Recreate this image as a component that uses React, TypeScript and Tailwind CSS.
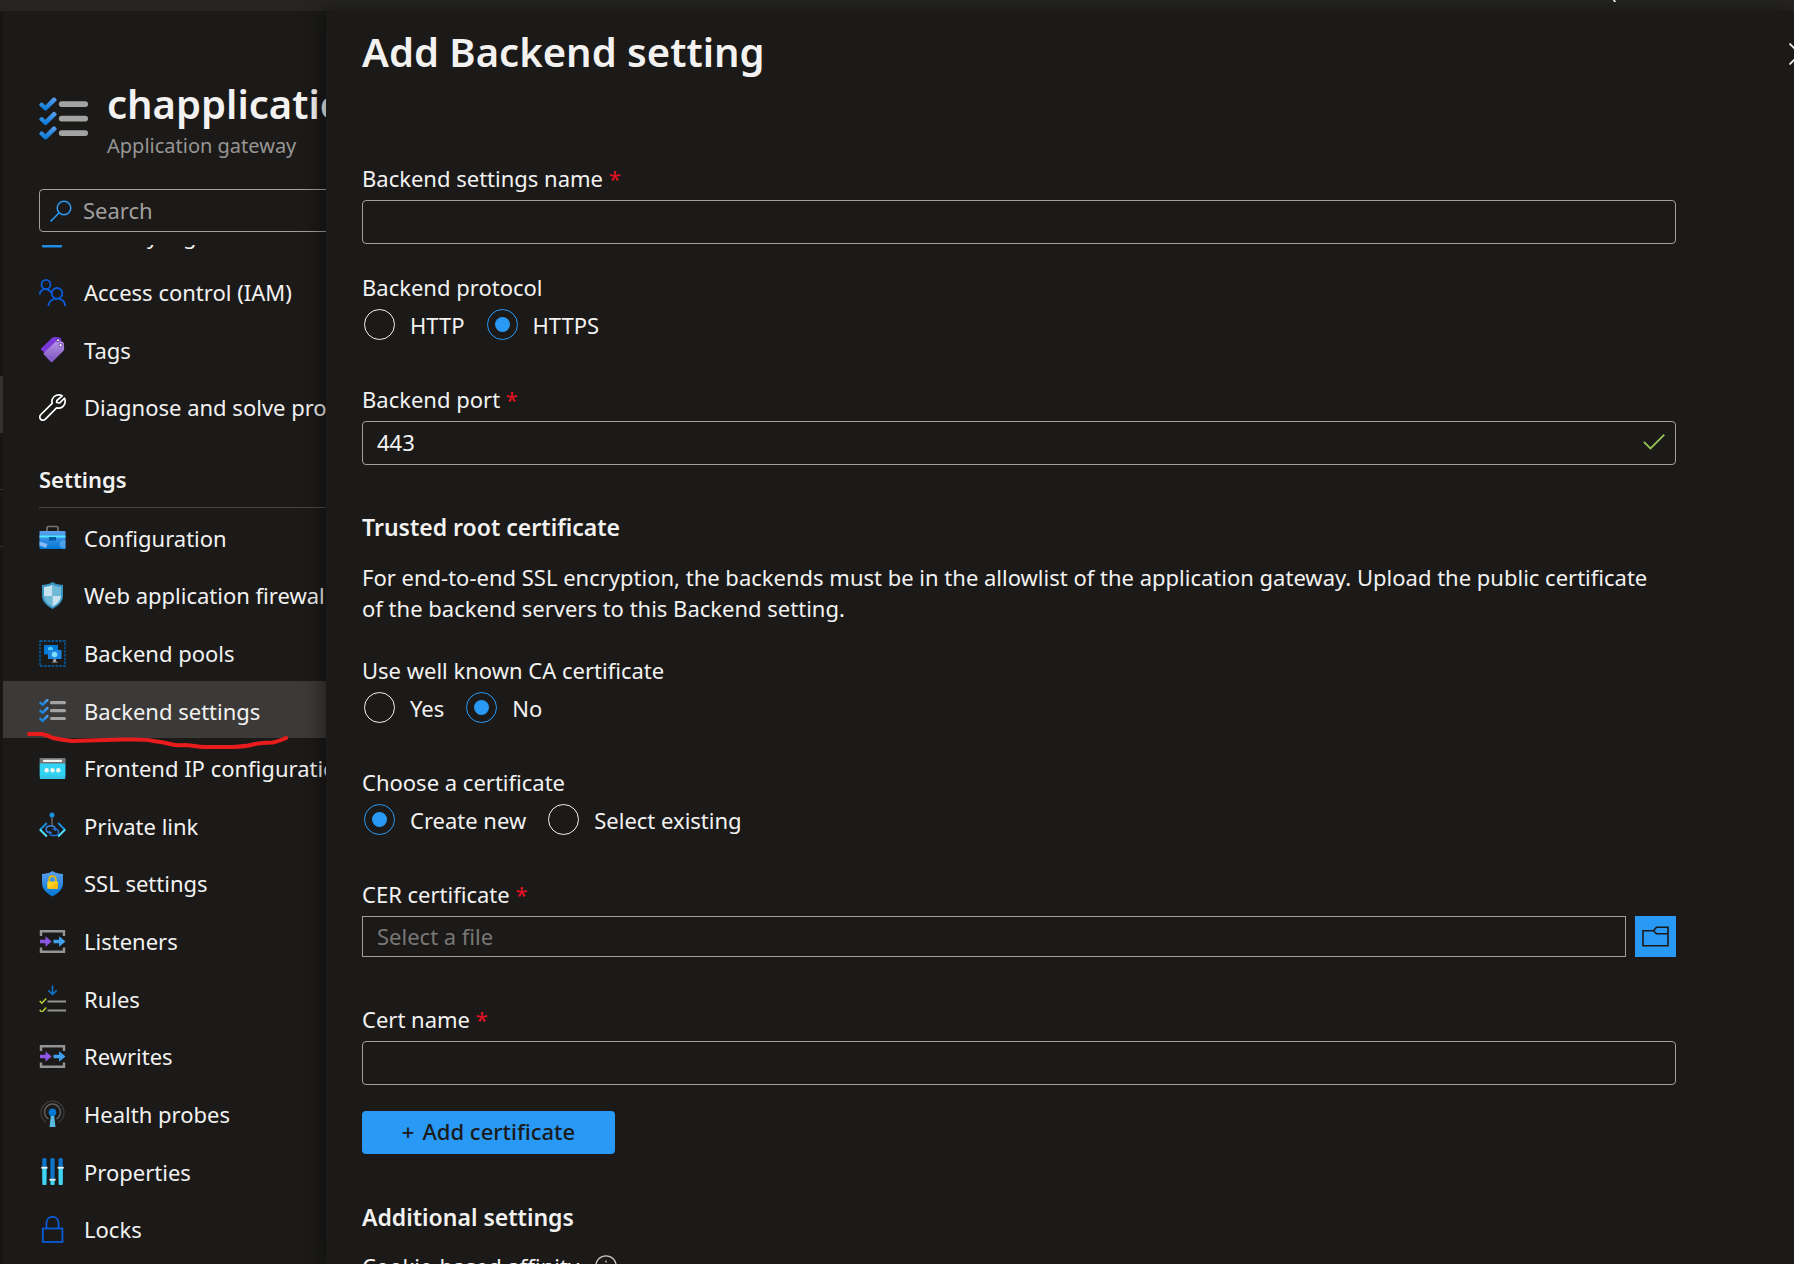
import { useState } from "react";
import type { ReactNode } from "react";

const ChecklistIcon = ({ className = "size-[27px]" }: { className?: string }) => (
  <svg viewBox="0 0 18 18" className={className} fill="none" aria-hidden="true">
    <defs>
      <linearGradient id="check-blue" x1="0" y1="0" x2="0" y2="1">
        <stop offset="0" stopColor="#5ea0ef" />
        <stop offset="1" stopColor="#0078d4" />
      </linearGradient>
    </defs>
    {[1.3, 6.6, 11.9].map((y) => (
      <g key={y} transform={`translate(0 ${y})`}>
        <path
          d="M0.1 2.5 L0.7 1.9 Q1 1.7 1.3 1.9 L2.3 2.9 L5.1 0.1 Q5.5 -0.2 5.9 0.1 L6.4 0.6 Q6.6 0.9 6.4 1.2 L2.8 4.7 Q2.4 5 2 4.7 L0.1 2.9 Z"
          fill="url(#check-blue)"
        />
        <rect x="7.3" y="1.4" width="10.7" height="2.1" rx="1" fill="#a3a3a3" />
      </g>
    ))}
  </svg>
);

const LogIcon = () => (
  <svg viewBox="0 0 27 27" className="size-[27px]" aria-hidden="true">
    <rect x="3" y="1" width="20" height="25.5" rx="1" fill="#1f8ce6" />
  </svg>
);

const PeopleIcon = () => (
  <svg viewBox="0 0 27 27" className="size-[27px]" fill="none" stroke="#0a5bd8" strokeWidth="1.8" aria-hidden="true">
    <circle cx="7" cy="5.4" r="4.5" />
    <circle cx="18" cy="14.3" r="5.3" />
    <path d="M0.8 15.5c0-3.2 2.3-5.5 5.5-5.5 2.4 0 4.3 1.1 6.2 3.8" />
    <path d="M9.2 27c.6-4.700 4.300-7.400 8.800-7.400s7.900 2.700 8.300 7.400" />
  </svg>
);

const TagsIcon = () => (
  <svg viewBox="0 0 27 27" className="size-[27px]" aria-hidden="true">
    <defs>
      <linearGradient id="tag-front" x1="0" y1="0" x2="0" y2="1">
        <stop offset="0" stopColor="#b796e8" />
        <stop offset="1" stopColor="#7b50bd" />
      </linearGradient>
    </defs>
    <path d="M2 12.5 13.500 1.600Q14.300 1 15.300 1L20 1.300Q22 1.600 22.200 3.500L22.500 8 9 19.500 2.300 14Q1.500 13.200 2 12.500Z" fill="#7938d8" />
    <path d="M4.800 17 16.500 5.800Q17.500 5 18.500 5L22.800 5.500Q24.600 6 24.800 7.500L25.200 13Q25.200 14.200 24.300 15L13 26.300Q12.400 26.600 11.900 26.100L4.800 18.500Q4.100 17.700 4.800 17Z" fill="url(#tag-front)" />
    <circle cx="19" cy="4.3" r="1.5" fill="#fff" stroke="#3c1a70" strokeWidth=".8" />
    <circle cx="21.6" cy="9.2" r="1.7" fill="#fff" stroke="#5a2fa0" strokeWidth=".9" />
  </svg>
);

const WrenchIcon = () => (
  <svg viewBox="0 0 27 27" className="size-[27px]" fill="none" stroke="#fff" strokeWidth="1.7" strokeLinejoin="round" aria-hidden="true">
    <path d="M23.200 1.800C19.500-.2 14.800 1.300 13.300 5.200c-.5 1.500-.5 2.800-.1 4.200L1.900 20.500c-1.500 1.500-1.500 3.500-.2 4.800s3.300 1.200 4.700-.2L17.600 13.900c4.600 1.200 8.600-2 8.600-6.600 0-1.200-.2-2.200-.7-3.100L20.700 9 17.600 8.500 17.900 6.500Z" />
  </svg>
);

const ToolboxIcon = () => (
  <svg viewBox="0 0 27 27" className="size-[27px]" aria-hidden="true">
    <defs>
      <linearGradient id="toolbox" x1="0" y1="0" x2="0" y2="1">
        <stop offset="0" stopColor="#5ea0ef" />
        <stop offset="1" stopColor="#0078d4" />
      </linearGradient>
    </defs>
    <path d="M8 7V4q0-1.500 1.500-1.500h8Q19 2.500 19 4V7" fill="none" stroke="#767676" strokeWidth="1.6" />
    <rect x=".5" y="7" width="26" height="18" rx=".8" fill="url(#toolbox)" />
    <rect x=".5" y="11.5" width="26" height="2" fill="#50e6ff" />
    <rect x="10" y="13" width="7" height="3.5" fill="#005ba1" />
    <path d="M.5 17.500l8 2.500-1.500 4-6.500-2.500z" fill="#83b9f9" />
    <path d="M26.500 16.500c-4-.5-6 1.500-6 4 0 2 1 3.500 3 4h3z" fill="#83b9f9" opacity=".5" />
  </svg>
);

const FirewallIcon = () => (
  <svg viewBox="0 0 27 27" className="size-[27px]" aria-hidden="true">
    <path d="M13.500 0C17 2.300 20.500 3 24 3v10.500c0 6.500-5 10.500-10.500 13.500C8 24 3 20 3 13.500V3c3.500 0 7-.7 10.500-3z" fill="#3a94c1" />
    <path d="M13.500 2.800V14H5V4.900c3-.2 5.800-.7 8.500-2.100z" fill="#c4e3ef" />
    <path d="M13.500 2.800V14H22V4.900c-3-.2-5.800-.7-8.500-2.100z" fill="#6fb8d8" />
    <path d="M5 14h8.500v10.700C9 22.200 5 18.800 5 14z" fill="#6fb8d8" />
    <path d="M22 14h-8.500v10.700C18 22.200 22 18.800 22 14z" fill="#c4e3ef" />
  </svg>
);

const PoolsIcon = () => (
  <svg viewBox="0 0 27 27" className="size-[27px]" aria-hidden="true">
    <rect x="1" y="1" width="25" height="25" fill="none" stroke="#0067b8" strokeWidth="1.3" strokeDasharray="2.6 1.2" />
    <rect x="5" y="5" width="14" height="9.5" fill="#0078d4" />
    <path d="M11.500 6.500l2.500 1.300v3l-2.500 1.200L9 10.800v-3z" fill="#50c8f5" />
    <rect x="9" y="10" width="13.5" height="9" fill="#1c84e0" />
    <path d="M15.500 11.500l2.700 1.400v3l-2.700 1.500-2.700-1.500v-3z" fill="#7fe0fb" />
    <path d="M14.500 19h2.300l.4 2.200 1.800 1.300h-6.600l1.700-1.300z" fill="#a3a3a3" />
  </svg>
);

const BrowserIcon = () => (
  <svg viewBox="0 0 27 27" className="size-[27px]" aria-hidden="true">
    <rect x=".8" y="3" width="25.5" height="21" rx=".8" fill="#32c5e8" />
    <rect x=".8" y="8.5" width="25.5" height="12" fill="#32d4f5" />
    <path d="M.8 3h25.500v5.500H.8z" fill="#767676" />
    <rect x="4" y="4.7" width="19" height="2.2" rx=".6" fill="#f2f2f2" />
    <circle cx="7.7" cy="15.3" r="2.2" fill="#f2f2f2" />
    <circle cx="13.5" cy="15.3" r="2.2" fill="#f2f2f2" />
    <circle cx="19.3" cy="15.3" r="2.2" fill="#f2f2f2" />
  </svg>
);

const PrivateLinkIcon = () => (
  <svg viewBox="0 0 27 27" className="size-[27px]" fill="none" aria-hidden="true">
    <path d="M13 5v9" stroke="#767676" strokeWidth="1.3" />
    <circle cx="13" cy="3" r="2.5" fill="#1490df" />
    <path d="M7.800 11 .9 18" stroke="#1490df" strokeWidth="1.8" />
    <path d="M.9 17.500l7 7" stroke="#50e6ff" strokeWidth="1.8" />
    <path d="M19.200 11l6.900 7" stroke="#1490df" strokeWidth="1.8" />
    <path d="M26.100 17.500l-7 7" stroke="#50e6ff" strokeWidth="1.8" />
    <path d="M12.800 20.600H10.500a3.300 3.300 0 010-6.600h2.800a3.300 3.300 0 012.800 4.700" stroke="#3b86e0" strokeWidth="1.5" />
    <path d="M13.500 16.900h2.700a3.300 3.300 0 010 6.600h-2.800a3.300 3.300 0 01-2.800-4.700" stroke="#1b6fd4" strokeWidth="1.5" />
  </svg>
);

const SslIcon = () => (
  <svg viewBox="0 0 27 27" className="size-[27px]" aria-hidden="true">
    <path d="M13.500 1C17 3.300 20.500 3.800 24 3.900V13c0 6.500-5 10.500-10.500 13.500C8 23.500 3 19.500 3 13V3.900c3.500-.1 7-.6 10.500-2.900z" fill="url(#toolbox)" />
    <path d="M10.200 12V9.300c0-4.200 6.600-4.200 6.600 0V12" fill="none" stroke="#e8b800" strokeWidth="1.7" />
    <rect x="8.3" y="11.5" width="10.5" height="7.2" rx=".6" fill="#ffd21f" />
    <path d="M18.800 12v6.700H9z" fill="#f5bd0c" />
  </svg>
);

const ArrowsIcon = () => (
  <svg viewBox="0 0 27 27" className="size-[27px]" aria-hidden="true">
    <path d="M2 8V3.300h23V8M2 19.500v4.200h23v-4.200" fill="none" stroke="#949494" strokeWidth="2.4" />
    <path d="M1 11.800h5.500V8.300l6.200 5.200-6.200 5.200v-3.500H1z" fill="#8a56e2" />
    <path d="M14.500 11.800h5.600V8.300l6.400 5.200-6.400 5.200v-3.500h-5.600z" fill="#3fa0ee" />
  </svg>
);

const RulesIcon = () => (
  <svg viewBox="0 0 27 27" className="size-[27px]" fill="none" aria-hidden="true">
    <path d="M13.500.5v9M9.200 5.200l4.300 4.300 4.300-4.300" stroke="#0f78cf" strokeWidth="1.5" />
    <path d="M8.500 16.500H27M8.500 25.500H27" stroke="#949494" strokeWidth="1.8" />
    <path d="M.7 16l2.200 2.200 4.300-4.700M.7 25l2.200 2.200 4.300-4.700" stroke="#b4d335" strokeWidth="1.5" />
  </svg>
);

const ProbeIcon = () => (
  <svg viewBox="0 0 27 27" className="size-[27px]" fill="none" aria-hidden="true">
    <path d="M7.500 22.500a11.500 11.500 0 1112 0" stroke="#3c3b3a" strokeWidth="1.3" />
    <path d="M9.500 19a8 8 0 118 0" stroke="#605e5c" strokeWidth="1.4" />
    <path d="M12 14h3l1.500 13h-6z" fill="#5ab8de" />
    <circle cx="13.5" cy="12.3" r="3.8" fill="#0078d4" />
  </svg>
);

const SlidersIcon = () => (
  <svg viewBox="0 0 27 27" className="size-[27px]" aria-hidden="true">
    {[
      { x: 3.3, y: 9.5 },
      { x: 11.4, y: 21.5 },
      { x: 19.6, y: 9.5 },
    ].map(({ x, y }) => (
      <g key={x}>
        <rect x={x} y="0" width="4.2" height="22" rx="1.5" fill="#0f74cc" />
        <rect x={x} y={y} width="4.2" height={27 - y} rx="1" fill="#3fd4f2" />
        <rect x={x - 1} y={y - 0.7} width="6.2" height="1.8" fill="#f2f2f2" />
      </g>
    ))}
  </svg>
);

const LockIcon = () => (
  <svg viewBox="0 0 27 27" className="size-[27px]" fill="none" stroke="#0a5bd8" strokeWidth="1.8" aria-hidden="true">
    <rect x="3.8" y="12.5" width="19.6" height="13.5" />
    <path d="M7.500 12.500V7c0-8.200 12-8.200 12 0v5.500" />
  </svg>
);

const generalItems = [
  { label: "Activity log", icon: <LogIcon /> },
  { label: "Access control (IAM)", icon: <PeopleIcon /> },
  { label: "Tags", icon: <TagsIcon /> },
  { label: "Diagnose and solve problems", icon: <WrenchIcon /> },
];

const settingItems = [
  { label: "Configuration", icon: <ToolboxIcon /> },
  { label: "Web application firewall", icon: <FirewallIcon /> },
  { label: "Backend pools", icon: <PoolsIcon /> },
  { label: "Backend settings", icon: <ChecklistIcon />, active: true },
  { label: "Frontend IP configurations", icon: <BrowserIcon /> },
  { label: "Private link", icon: <PrivateLinkIcon /> },
  { label: "SSL settings", icon: <SslIcon /> },
  { label: "Listeners", icon: <ArrowsIcon /> },
  { label: "Rules", icon: <RulesIcon /> },
  { label: "Rewrites", icon: <ArrowsIcon /> },
  { label: "Health probes", icon: <ProbeIcon /> },
  { label: "Properties", icon: <SlidersIcon /> },
  { label: "Locks", icon: <LockIcon /> },
];

type NavItemProps = { label: string; icon: ReactNode; active?: boolean };

const NavItem = ({ label, icon, active }: NavItemProps) => (
  <li className="relative">
    <a
      href="#"
      aria-current={active ? "page" : undefined}
      className={
        active
          ? "flex h-full items-center gap-[18px] whitespace-nowrap bg-[#3b3a39] pl-9 pt-0.5"
          : "flex h-full items-center gap-[18px] whitespace-nowrap pl-9 pt-0.5"
      }
    >
      <span className="shrink-0">{icon}</span>
      {label}
    </a>
    {active && (
      <svg
        viewBox="0 0 262 18"
        className="pointer-events-none absolute left-6 top-[50px] z-10 h-[18px] w-[262px]"
        fill="none"
        stroke="#e81c1c"
        strokeWidth="4"
        strokeLinecap="round"
        strokeLinejoin="round"
        aria-hidden="true"
      >
        <path d="M2 3H15Q20 4 26 7Q35 9 45 10Q70 9 96 8.500T126 10Q136 11 143 13T159 14Q168 15 175 16H206Q218 15.500 226 13.500T246 11.500Q253 10 259 7" />
      </svg>
    )}
  </li>
);

const Required = () => <span className="text-[#e81123]"> *</span>;

type RadioFieldProps = {
  legend: string;
  name: string;
  options: string[];
  initial: string;
  className?: string;
};

const RadioField = ({ legend, name, options, initial, className }: RadioFieldProps) => {
  const [value, setValue] = useState(initial);

  return (
    <fieldset className={className}>
      <legend>{legend}</legend>
      <div className="mt-[7px] flex gap-[22px] pl-0.5">
        {options.map((option) => (
          <label key={option} className="flex h-[31px] items-center gap-[15px]">
            <input
              type="radio"
              name={name}
              checked={value === option}
              onChange={() => setValue(option)}
              className="grid size-[31px] appearance-none place-content-center rounded-full border border-[#f3f2f1] before:size-[15px] before:rounded-full checked:border-[#2899f5] checked:before:bg-[#2899f5]"
            />
            <span>{option}</span>
          </label>
        ))}
      </div>
    </fieldset>
  );
};

const Sidebar = () => (
  <aside className="relative flex w-[323px] shrink-0 flex-col overflow-hidden">
    <div className="flex gap-[19px] pl-9 pt-[68px]">
      <ChecklistIcon className="mt-[15px] size-[49px] shrink-0" />
      <div>
        <h1 className="text-[40px] font-semibold leading-[50px]">chapplicationgateway</h1>
        <p className="mt-0.5 text-xl leading-[30px] text-[#979593]">Application gateway</p>
      </div>
    </div>
    <label className="ml-9 mt-7 flex h-[43px] w-[400px] shrink-0 items-center gap-[11px] rounded-sm border border-[#a19f9d] pl-2.5">
      <svg viewBox="0 0 22 22" className="size-[22px]" fill="none" stroke="#2899f5" strokeWidth="1.5" aria-hidden="true">
        <circle cx="14" cy="8" r="6.8" />
        <path d="M9.200 12.800.6 21.400" />
      </svg>
      <input
        type="text"
        aria-label="Search"
        placeholder="Search"
        className="bg-transparent pb-0.5 outline-none placeholder:text-[#a19f9d]"
      />
    </label>
    <nav className="mt-[13px] min-h-0 flex-1 overflow-hidden">
      {/* list is scrolled a little, first row is cut off */}
      <ul className="-mt-10 grid h-[230px] auto-rows-fr">
        {generalItems.map((item) => (
          <NavItem key={item.label} {...item} />
        ))}
      </ul>
      <h2 className="ml-9 mt-[29px] border-b border-[#484644] pb-[13px] font-semibold">Settings</h2>
      <ul className="grid h-[749px] auto-rows-fr">
        {settingItems.map((item) => (
          <NavItem key={item.label} {...item} />
        ))}
      </ul>
    </nav>
  </aside>
);

const inputClass =
  "mt-[7px] block h-11 w-full rounded-sm border border-[#a19f9d] bg-transparent px-[14px] pb-0.5 outline-none";

const BackendSettingPanel = () => {
  const [port, setPort] = useState("443");

  return (
    <main className="relative z-20 min-w-0 flex-1 overflow-hidden bg-[#1b1a19] pl-9 pr-[118px] shadow-[-4px_0_18px_rgba(0,0,0,0.45)]">
      <h1 className="pt-4 text-[40px] font-semibold leading-[50px]">Add Backend setting</h1>
      <button type="button" aria-label="Close" className="absolute -right-[17px] top-8">
        <svg viewBox="0 0 22 22" className="size-[22px]" stroke="#f3f2f1" strokeWidth="1.8" aria-hidden="true">
          <path d="M.5.5l21 21M21.500.5l-21 21" />
        </svg>
      </button>

      <form onSubmit={(e) => e.preventDefault()}>
        <div className="mt-[86px]">
          <label htmlFor="name">
            Backend settings name
            <Required />
          </label>
          <input id="name" type="text" className={inputClass} />
        </div>

        <RadioField
          legend="Backend protocol"
          name="protocol"
          options={["HTTP", "HTTPS"]}
          initial="HTTPS"
          className="mt-7"
        />

        <div className="mt-11">
          <label htmlFor="port">
            Backend port
            <Required />
          </label>
          <div className="relative">
            <input
              id="port"
              type="text"
              value={port}
              onChange={(e) => setPort(e.target.value)}
              className={inputClass}
            />
            <svg
              viewBox="0 0 22 16"
              className="absolute right-[11px] top-[13px] h-4 w-[22px]"
              fill="none"
              stroke="#92c353"
              strokeWidth="1.8"
              aria-hidden="true"
            >
              <path d="M.8 7.800l6.700 6.700L21.300.7" />
            </svg>
          </div>
        </div>

        <h2 className="mt-[47px] text-[23px] font-semibold">Trusted root certificate</h2>
        <p className="mt-5 pr-4 leading-[31px]">
          For end-to-end SSL encryption, the backends must be in the allowlist of the application gateway. Upload the
          public certificate of the backend servers to this Backend setting.
        </p>

        <RadioField
          legend="Use well known CA certificate"
          name="wellKnown"
          options={["Yes", "No"]}
          initial="No"
          className="mt-[31px]"
        />
        <RadioField
          legend="Choose a certificate"
          name="certificate"
          options={["Create new", "Select existing"]}
          initial="Create new"
          className="mt-11"
        />

        <div className="mt-11">
          <label htmlFor="file">
            CER certificate
            <Required />
          </label>
          <div className="mt-[7px] flex gap-[9px]">
            <input
              id="file"
              type="text"
              placeholder="Select a file"
              className="h-[41px] min-w-0 flex-1 border border-[#a19f9d] bg-transparent px-[14px] pb-0.5 outline-none placeholder:text-[#797775]"
            />
            <button
              type="button"
              aria-label="Browse"
              className="flex size-[41px] items-center justify-center bg-[#2899f5]"
            >
              <svg viewBox="0 0 27 21" className="h-[21px] w-[27px]" fill="none" stroke="#1b1a19" strokeWidth="1.6" aria-hidden="true">
                <path d="M1 4.800h10.500L14.500 1.200H26V19.800H1zM11.500 4.800l3 3H26" />
              </svg>
            </button>
          </div>
        </div>

        <div className="mt-[47px]">
          <label htmlFor="certName">
            Cert name
            <Required />
          </label>
          <input id="certName" type="text" className={inputClass} />
        </div>

        <button
          type="button"
          className="mt-[26px] flex h-[43px] w-[253px] items-center justify-center gap-2 rounded-sm bg-[#2899f5] pb-1 font-medium text-[#1b1a19]"
        >
          <span>+</span>
          <span>Add certificate</span>
        </button>

        <h2 className="mt-12 text-[23px] font-semibold">Additional settings</h2>
        <div className="mt-[19px] flex items-center gap-4">
          <span>Cookie-based affinity</span>
          <svg viewBox="0 0 22 22" className="size-[22px]" fill="none" stroke="#c8c6c4" strokeWidth="1.3" aria-hidden="true">
            <circle cx="11" cy="11" r="10.2" />
            <path d="M11 9.500v7M11 5.500v2" />
          </svg>
        </div>
      </form>
    </main>
  );
};

const App = () => {
  return (
    <div className="flex h-screen flex-col overflow-hidden bg-[#1b1a19] font-['Noto_Sans',sans-serif] text-[22px] leading-[30px] text-[#f3f2f1]">
      <header className="flex h-[11px] shrink-0 justify-end bg-[#252423] pr-[178px]">
        <svg viewBox="0 0 3 2" className="h-0.5 w-[3px]" aria-hidden="true">
          <path d="M0 0h2l1 2H1z" fill="#fff" />
        </svg>
      </header>
      <div className="flex min-h-0 flex-1">
        {/* edge of the blade behind */}
        <div className="w-[3px] shrink-0 bg-[#171615] pt-[365px]">
          <div className="h-[57px] bg-[#323130]" />
          <div className="mt-14 h-px bg-[#323130]" />
          <div className="mt-14 h-px bg-[#323130]" />
        </div>
        <Sidebar />
        <BackendSettingPanel />
      </div>
    </div>
  );
};

export default App;
